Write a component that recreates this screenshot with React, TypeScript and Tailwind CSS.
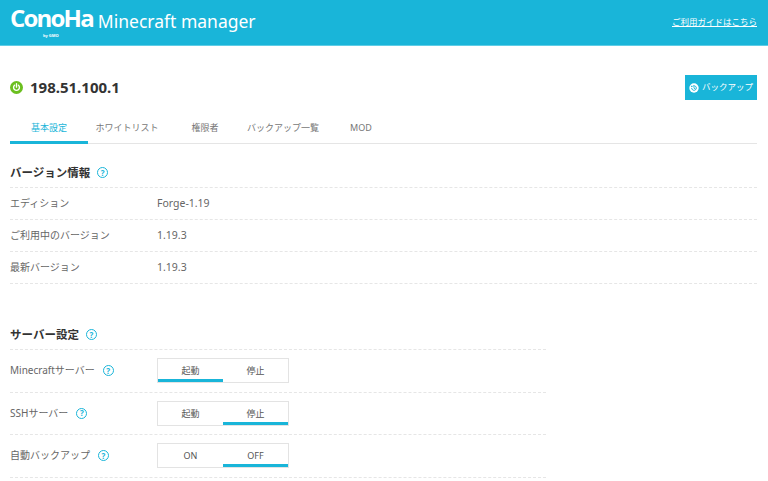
import { ReactNode } from "react";

const CYAN = "#19b5d9";

function HelpIcon({ className = "" }: { className?: string }) {
  return (
    <span
      className={`inline-flex h-[11px] w-[11px] items-center justify-center rounded-full border border-[#19b5d9] text-[8px] font-bold leading-none text-[#19b5d9] ${className}`}
    >
      ?
    </span>
  );
}

function PowerIcon() {
  return (
    <svg width="13" height="13" viewBox="0 0 16 16">
      <circle cx="8" cy="8" r="8" fill="#6bbf1f" />
      <path d="M5.6 5.2a3.6 3.6 0 1 0 4.8 0" fill="none" stroke="#fff" strokeWidth="1.7" strokeLinecap="round" />
      <line x1="8" y1="3.4" x2="8" y2="7.6" stroke="#fff" strokeWidth="1.7" strokeLinecap="round" />
    </svg>
  );
}

function BackupIcon() {
  return (
    <svg width="10" height="10" viewBox="0 0 16 16">
      <circle cx="8" cy="8" r="7.5" fill="#fff" />
      <path d="M4.3 8a3.7 3.7 0 1 0 1.2-2.7" fill="none" stroke={CYAN} strokeWidth="1.6" />
      <path d="M3.4 3.8l2.4 1.6-2.6 1.3z" fill={CYAN} />
      <path d="M8 5.6V8.3l1.8 1.1" fill="none" stroke={CYAN} strokeWidth="1.4" strokeLinecap="round" />
    </svg>
  );
}

function Logo() {
  return (
    <div className="flex flex-col">
      <span
        className="text-[24px] font-bold leading-[22px] tracking-[-1.8px] text-white"
        style={{ fontFamily: "'Open Sans', 'Noto Sans', sans-serif" }}
      >
        ConoHa
      </span>
      <span className="ml-[33px] mt-[5px] text-[4px] font-bold leading-none text-white">by GMO</span>
    </div>
  );
}

const tabs = ["基本設定", "ホワイトリスト", "権限者", "バックアップ一覧", "MOD"];

function SectionHeading({ title, className = "" }: { title: string; className?: string }) {
  return (
    <div className={`flex h-[30px] items-center gap-[7px] border-b border-dashed border-[#e6e6e6] ${className}`}>
      <span className="text-[11.5px] font-bold text-[#333]">{title}</span>
      <HelpIcon />
    </div>
  );
}

function InfoRow({ label, value }: { label: string; value: string }) {
  return (
    <div className="flex h-[32px] items-center border-b border-dashed border-[#e6e6e6] text-[10px] text-[#666]">
      <span className="w-[147px]">{label}</span>
      <span className="text-[10.5px]">{value}</span>
    </div>
  );
}

function Toggle({ options, active }: { options: [string, string]; active: number }) {
  return (
    <div className="flex h-[25px] w-[132px] border border-[#e3e3e3]">
      {options.map((opt, i) => (
        <div key={opt} className="relative flex flex-1 items-center justify-center text-[9px] text-[#555]">
          {opt}
          {i === active ? <span className="absolute inset-x-0 bottom-0 h-[3px] bg-[#19b5d9]" /> : null}
        </div>
      ))}
    </div>
  );
}

function SettingRow({ label, children }: { label: ReactNode; children: ReactNode }) {
  return (
    <div className="flex h-[42.5px] items-center border-b border-dashed border-[#e6e6e6] text-[10px] text-[#666]">
      <div className="flex w-[147px] items-center">{label}</div>
      {children}
    </div>
  );
}

export default function App() {
  return (
    <div
      className="h-[481px] w-[768px] overflow-hidden bg-white"
      style={{ fontFamily: "'Noto Sans', 'Noto Sans CJK JP', sans-serif" }}
    >
      <header className="flex h-[46px] items-center justify-between border-b border-[#5fcde6] bg-[#19b5d9] pl-[10px] pr-[11px]">
        <div className="flex items-center gap-[5px]">
          <Logo />
          <span className="-mt-[3px] text-[17.5px] text-white">Minecraft manager</span>
        </div>
        <a className="text-[8.5px] text-white underline">ご利用ガイドはこちら</a>
      </header>

      <main className="pl-[10px] pr-[11px]">
        <div className="mt-[29px] flex h-[25px] items-center justify-between">
          <div className="flex items-center gap-[7px]">
            <PowerIcon />
            <span className="text-[15px] font-bold text-[#333]">198.51.100.1</span>
          </div>
          <button className="flex h-[25px] w-[72px] items-center justify-center gap-[3px] bg-[#19b5d9] text-[8.5px] text-white">
            <BackupIcon />
            バックアップ
          </button>
        </div>

        <nav className="mt-[12px] flex h-[32px] border-b border-[#e5e5e5]">
          {tabs.map((t, i) => (
            <div
              key={t}
              className={`flex w-[78px] items-center justify-center text-[9px] ${i === 0 ? "-mb-px border-b-[3px] border-[#19b5d9] pt-[2px] text-[#19b5d9]" : "text-[#777]"}`}
            >
              {t}
            </div>
          ))}
        </nav>

        <SectionHeading title="バージョン情報" className="mt-[14px]" />
        <InfoRow label="エディション" value="Forge-1.19" />
        <InfoRow label="ご利用中のバージョン" value="1.19.3" />
        <InfoRow label="最新バージョン" value="1.19.3" />

        <div className="w-[536px]">
          <SectionHeading title="サーバー設定" className="mt-[36px]" />
          <SettingRow label={<>Minecraftサーバー<HelpIcon className="ml-[8px]" /></>}>
            <Toggle options={["起動", "停止"]} active={0} />
          </SettingRow>
          <SettingRow label={<>SSHサーバー<HelpIcon className="ml-[8px]" /></>}>
            <Toggle options={["起動", "停止"]} active={1} />
          </SettingRow>
          <SettingRow label={<>自動バックアップ<HelpIcon className="ml-[8px]" /></>}>
            <Toggle options={["ON", "OFF"]} active={1} />
          </SettingRow>
        </div>
      </main>
    </div>
  );
}
